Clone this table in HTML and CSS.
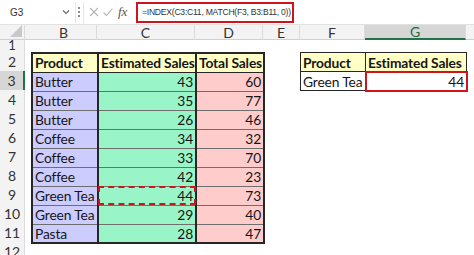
FILE: index.html
```html
<!DOCTYPE html>
<html>
<head>
<meta charset="utf-8">
<link rel="stylesheet" href="styles.css">
</head>
<body>
<div class="fbar">
  <div class="namebox"><span class="nb-text">G3</span><svg class="chev" width="8" height="6" viewBox="0 0 8 6"><path d="M1 1.5 L4 4.5 L7 1.5" fill="none" stroke="#666" stroke-width="1.1"/></svg></div>
  <div class="dots"><i></i><i></i><i></i></div>
  <div class="fbtns">
    <svg width="12" height="12" viewBox="0 0 12 12"><path d="M2 2 L10 10 M10 2 L2 10" stroke="#b5b5b5" stroke-width="1.1" fill="none"/></svg>
    <svg width="12" height="12" viewBox="0 0 12 12"><path d="M1.5 6.5 L4.5 9.5 L10.5 2.5" stroke="#b5b5b5" stroke-width="1.1" fill="none"/></svg>
    <span class="fx">fx</span>
  </div>
  <div class="formula">=INDEX(C3:C11, MATCH(F3, B3:B11, 0))</div>
</div>
<div class="sheet">
  <div class="corner"><svg width="12" height="12" viewBox="0 0 12 12"><path d="M12 0 L12 12 L0 12 Z" fill="#c8c8c8"/></svg></div>
  <div class="ch chA"></div>
  <div class="ch">B</div>
  <div class="ch">C</div>
  <div class="ch">D</div>
  <div class="ch">E</div>
  <div class="ch">F</div>
  <div class="ch sel">G</div>
  <div class="ch last"></div>

  <div class="rh r1"><span>1</span></div>
  <div class="rh">2</div>
  <div class="rh selr">3</div>
  <div class="rh">4</div>
  <div class="rh">5</div>
  <div class="rh">6</div>
  <div class="rh">7</div>
  <div class="rh">8</div>
  <div class="rh">9</div>
  <div class="rh">10</div>
  <div class="rh">11</div>
  <div class="rh r12"><span>12</span></div>

  <table class="data">
    <colgroup><col class="cb"><col class="cc"><col class="cd"></colgroup>
    <tr><th class="hd">Product</th><th class="hd">Estimated Sales</th><th class="hd">Total Sales</th></tr>
    <tr><td class="p">Butter</td><td class="e">43</td><td class="t">60</td></tr>
    <tr><td class="p">Butter</td><td class="e">35</td><td class="t">77</td></tr>
    <tr><td class="p">Butter</td><td class="e">26</td><td class="t">46</td></tr>
    <tr><td class="p">Coffee</td><td class="e">34</td><td class="t">32</td></tr>
    <tr><td class="p">Coffee</td><td class="e">33</td><td class="t">70</td></tr>
    <tr><td class="p">Coffee</td><td class="e">42</td><td class="t">23</td></tr>
    <tr><td class="p">Green Tea</td><td class="e marked">44</td><td class="t">73</td></tr>
    <tr><td class="p">Green Tea</td><td class="e">29</td><td class="t">40</td></tr>
    <tr><td class="p">Pasta</td><td class="e">28</td><td class="t">47</td></tr>
  </table>

  <table class="lookup">
    <colgroup><col class="cf"><col class="cg"></colgroup>
    <tr><th class="hd">Product</th><th class="hd">Estimated Sales</th></tr>
    <tr><td class="w">Green Tea</td><td class="w num result">44</td></tr>
  </table>
</div>
</body>
</html>
```
FILE: styles.css
```css
* { box-sizing: border-box; }
html, body { margin: 0; padding: 0; background: #fff; }
body { width: 474px; height: 255px; overflow: hidden; font-family: "Lato", "Liberation Sans", sans-serif; color: #161616; }

.fbar { height: 25px; display: flex; align-items: center; background: #fff; border-bottom: 1px solid #e1e1e1; }
.namebox { flex: none; width: 74px; height: 21px; margin-left: 2px; display: flex; align-items: center; justify-content: space-between; padding: 0 5px 0 8px; border-right: 1px solid #e6e6e6; }
.nb-text { font-family: "Liberation Sans", sans-serif; font-size: 10px; color: #333; }
.dots { flex: none; width: 4px; display: flex; flex-direction: column; align-items: center; gap: 2px; margin-left: 1px; }
.dots i { width: 2px; height: 2px; background: #666; border-radius: 1px; display: block; }
.fbtns { flex: none; display: flex; align-items: center; gap: 2px; height: 21px; width: 53px; padding-left: 4px; border-left: 1px solid #e6e6e6; margin-left: 2px; }
.fx { font-family: "Liberation Serif", serif; font-style: italic; font-size: 13px; color: #555; margin-left: 2px; }
.formula { flex: none; height: 21px; width: 158px; border: 2px solid #d0141b; font-family: "Liberation Sans", sans-serif; font-size: 8.6px; letter-spacing: -0.25px; color: #333; display: flex; align-items: center; padding-left: 4px; white-space: nowrap; overflow: hidden; }

.sheet { display: grid; grid-template-columns: 25px 6px 66px 98px 68px 37px 65px 101px 8px; grid-template-rows: 15px 12px repeat(10, 19px) 13px; }
.corner { grid-column: 1; grid-row: 1; background: #f3f3f3; border-right: 1px solid #dcdcdc; border-bottom: 1px solid #d0d0d0; display: flex; align-items: flex-end; justify-content: flex-end; padding: 0 2px 2px 0; }
.ch { grid-row: 1; background: #f3f3f3; border-right: 1px solid #dcdcdc; border-bottom: 1px solid #d0d0d0; font-size: 14px; color: #333; display: flex; align-items: center; justify-content: center; }
.ch.chA { border-right: none; }
.ch.sel { background: #d6d6d6; border-bottom: 2px solid #217346; color: #1d6b40; }
.ch.last { border-right: none; }
.rh { grid-column: 1; background: #f3f3f3; border-right: 1px solid #dcdcdc; font-size: 14px; color: #333; display: flex; align-items: center; justify-content: center; }
.rh.r1 { overflow: hidden; align-items: flex-end; }
.rh.r1 span { display: block; height: 10px; line-height: 6px; font-size: 13px; }
.rh.r12 { align-items: flex-start; padding-top: 4px; overflow: hidden; }
.rh.r12 span { display: block; line-height: 12px; height: 9px; overflow: hidden; }
.rh.selr { background: #d6d6d6; border-right: 2px solid #217346; }

table { border-collapse: collapse; table-layout: fixed; font-size: 13.8px; letter-spacing: -0.15px; }
td, th { height: 19px; padding: 0 2px 0 2px; white-space: nowrap; overflow: hidden; }
th { font-weight: bold; text-align: left; }
.cb { width: 66px; } .cc { width: 98px; } .cd { width: 68px; }
.cf { width: 65px; } .cg { width: 101px; }
.data { grid-column: 3 / 6; grid-row: 3 / 13; width: 232px; border: 2px solid #262626; }
.data th, .data td { border: 1px solid #6e6e6e; }
.data th { border-left: 2px solid #262626; border-right: 2px solid #262626; border-bottom: 1px solid #262626; }
.data td.e { border-left: 2px solid #262626; border-right: 2px solid #262626; }
.hd { background: #ffffc6; }
.p { background: #ccccff; }
.e { background: #99f5c8; text-align: right; }
.t { background: #ffcccc; text-align: right; }
.e.marked { outline: 2px dashed #d0141b; outline-offset: -2px; }

.lookup { grid-column: 7 / 9; grid-row: 3 / 5; width: 166px; border: 1.5px solid #262626; align-self: start; }
.lookup th, .lookup td { border: 1px solid #262626; }
.w { background: #fff; }
.num { text-align: right; }
.result { outline: 2px solid #d0141b; outline-offset: -1px; }
```
